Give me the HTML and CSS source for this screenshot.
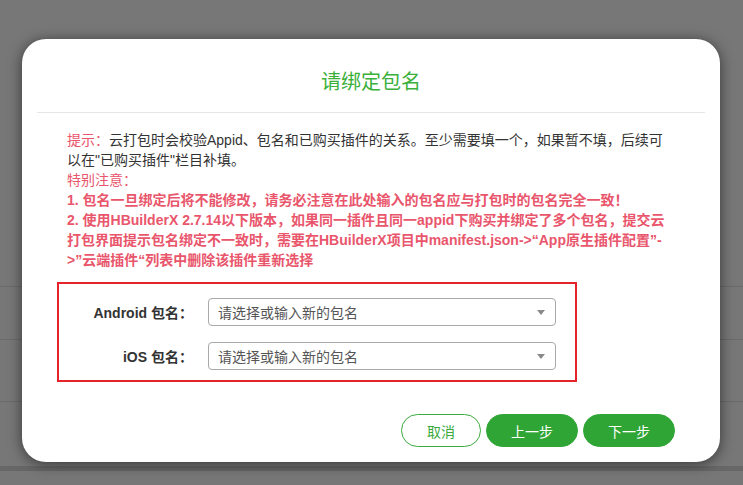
FILE: index.html
```html
<!DOCTYPE html>
<html lang="zh">
<head>
<meta charset="utf-8">
<title>请绑定包名</title>
<link rel="stylesheet" href="styles.css">
</head>
<body>
<div class="page">
  <div class="page-row r1"></div>
  <div class="page-row r2"></div>
  <div class="page-row r3"></div>
  <div class="page-band"></div>
</div>
<div class="mask">
  <div class="modal">
    <div class="modal-header">
      <h2 class="modal-title">请绑定包名</h2>
    </div>
    <div class="modal-body">
      <div class="notice">
        <p><span class="red">提示：</span>云打包时会校验Appid、包名和已购买插件的关系。至少需要填一个，如果暂不填，后续可以在"已购买插件"栏目补填。</p>
        <p class="red">特别注意：</p>
        <p class="red bold">1. 包名一旦绑定后将不能修改，请务必注意在此处输入的包名应与打包时的包名完全一致！</p>
        <p class="red bold">2. 使用HBuilderX 2.7.14以下版本，如果同一插件且同一appid下购买并绑定了多个包名，提交云打包界面提示包名绑定不一致时，需要在HBuilderX项目中manifest.json-&gt;“App原生插件配置”-&gt;”云端插件“列表中删除该插件重新选择</p>
      </div>
      <div class="form-box">
        <div class="form-row">
          <label class="form-label">Android 包名：</label>
          <div class="select">
            <span class="select-text">请选择或输入新的包名</span>
            <span class="caret"></span>
          </div>
        </div>
        <div class="form-row">
          <label class="form-label">iOS 包名：</label>
          <div class="select">
            <span class="select-text">请选择或输入新的包名</span>
            <span class="caret"></span>
          </div>
        </div>
      </div>
    </div>
    <div class="modal-footer">
      <button class="btn btn-outline">取消</button>
      <button class="btn btn-primary">上一步</button>
      <button class="btn btn-primary">下一步</button>
    </div>
  </div>
</div>
</body>
</html>
```

FILE: styles.css
```css
* { box-sizing: border-box; }
html, body {
  margin: 0;
  padding: 0;
  width: 743px;
  height: 485px;
  overflow: hidden;
}
body {
  background: #777777;
  font-family: "Liberation Sans", "Noto Sans CJK SC", sans-serif;
  position: relative;
}
.page {
  height: 485px;
  display: flex;
  flex-direction: column;
}
.page-row {
  border-bottom: 1px solid #6a6a6a;
}
.r1 { height: 287px; }
.r2 { height: 53px; }
.r3 { height: 62px; }
.page-band {
  margin-top: 64px;
  height: 5px;
  background: #676767;
}
.mask {
  position: absolute;
  left: 0;
  top: 0;
  width: 743px;
  height: 485px;
  padding: 39px 23px 0 22px;
}
.modal {
  width: 698px;
  height: 423px;
  background: #ffffff;
  border-radius: 24px;
  box-shadow: 0 2px 14px rgba(0, 0, 0, 0.55);
  padding: 0 15px;
  display: flex;
  flex-direction: column;
}
.modal-header {
  padding: 28px 0 15px;
  border-bottom: 1px solid #e6e6e6;
}
.modal-title {
  margin: 0;
  text-align: center;
  font-weight: normal;
  font-size: 20px;
  line-height: 30px;
  color: #3bb03b;
}
.modal-body {
  padding: 17px 29px 0 30px;
}
.notice p {
  margin: 0;
  font-size: 14px;
  line-height: 20px;
  color: #333333;
}
.notice .red { color: #e9566c; }
.notice .bold { font-weight: bold; }
.form-box {
  margin: 12px 99px 0 -10px;
  border: 2px solid #e6232b;
  padding: 14px 0 10px;
  display: flex;
  flex-direction: column;
  gap: 16px;
}
.form-row {
  display: flex;
  align-items: center;
}
.form-label {
  width: 149px;
  padding-right: 15px;
  text-align: right;
  font-size: 14px;
  font-weight: bold;
  color: #333333;
}
.select {
  width: 348px;
  height: 28px;
  border: 1px solid #a9a9a9;
  border-radius: 4px;
  padding: 0 9px;
  display: flex;
  align-items: center;
  justify-content: space-between;
}
.select-text {
  font-size: 14px;
  color: #555555;
}
.caret {
  width: 0;
  height: 0;
  border-left: 4px solid transparent;
  border-right: 4px solid transparent;
  border-top: 5px solid #8a8a8a;
  margin-right: 1px;
}
.modal-footer {
  margin-top: auto;
  padding: 0 30px 15px;
  display: flex;
  justify-content: flex-end;
  gap: 5px;
}
.btn {
  height: 33px;
  border-radius: 17px;
  font-family: "Liberation Sans", "Noto Sans CJK SC", sans-serif;
  font-size: 14px;
  cursor: pointer;
}
.btn-outline {
  width: 80px;
  background: #ffffff;
  border: 1px solid #3aaa3f;
  color: #3aaa3f;
}
.btn-primary {
  width: 92px;
  background: #2fa535;
  border: 1px solid #2fa535;
  color: #ffffff;
}
```
